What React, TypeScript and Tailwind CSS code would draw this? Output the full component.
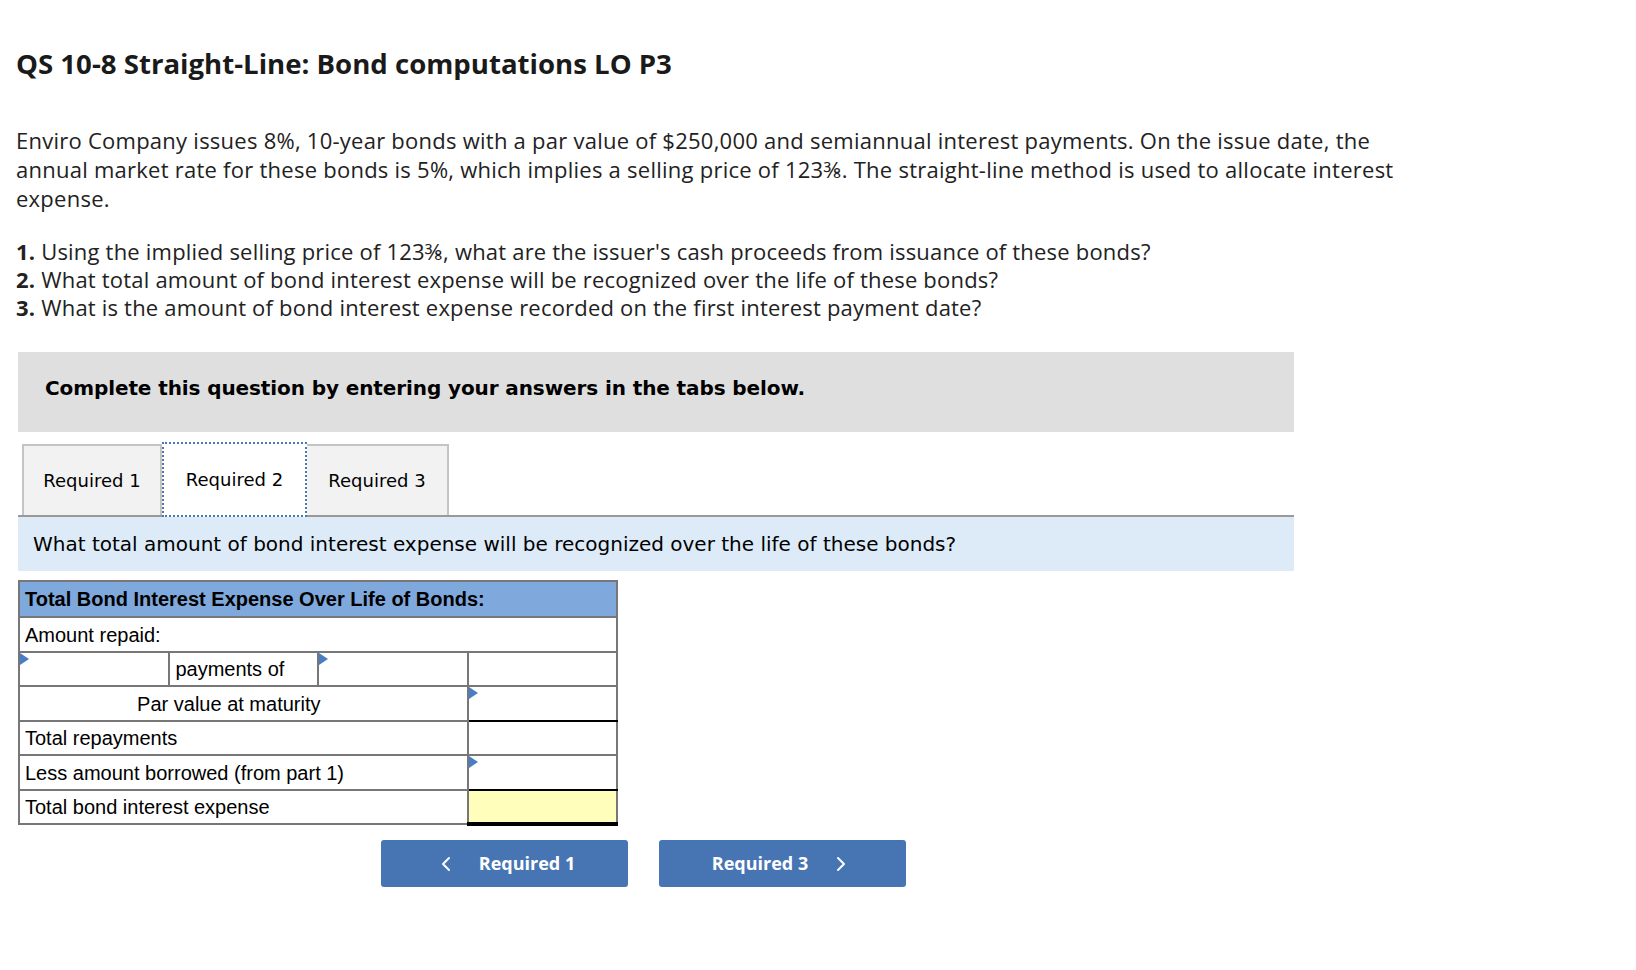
import React from 'react';
import { ChevronLeft, ChevronRight } from 'lucide-react';

const Marker = () => (
  <span className="absolute left-0 top-0 w-0 h-0 border-y-[6px] border-y-transparent border-l-[9px] border-l-[#4a7ec4]" />
);

const App = () => {
  const arial = { fontFamily: '"Liberation Sans", Arial, sans-serif' };
  const proxima = { fontFamily: '"Open Sans", Lato, sans-serif' };
  return (
    <div className="bg-white min-h-[970px] text-[#222]">
      <div className="pl-4 pt-[44px]" style={proxima}>
        <h1 className="text-[27.6px] font-bold leading-[38px] text-[#1a1a1a]">
          QS 10-8 Straight-Line: Bond computations LO P3
        </h1>
        <p className="mt-[44px] text-[22px] leading-[29px] tracking-[0.25px] text-[#222]">
          Enviro Company issues 8%, 10-year bonds with a par value of $250,000 and semiannual interest payments. On the issue date, the
          <br />
          annual market rate for these bonds is 5%, which implies a selling price of 123⅜. The straight-line method is used to allocate interest
          <br />
          expense.
        </p>
        <ol className="mt-[24px] text-[22px] leading-[28px] tracking-[0.2px]">
          <li><b>1.</b> Using the implied selling price of 123⅜, what are the issuer's cash proceeds from issuance of these bonds?</li>
          <li><b>2.</b> What total amount of bond interest expense will be recognized over the life of these bonds?</li>
          <li><b>3.</b> What is the amount of bond interest expense recorded on the first interest payment date?</li>
        </ol>
      </div>

      <div className="ml-[18px] w-[1276px] mt-[31px]" style={{ fontFamily: '"DejaVu Sans", Verdana, sans-serif' }}>
        <div className="bg-[#dfdfdf] h-[80px] pl-[27px] pt-[21px]">
          <p className="text-[20px] font-bold tracking-[-0.1px] text-black">Complete this question by entering your answers in the tabs below.</p>
        </div>

        <div className="mt-[10px] flex items-end pl-[4px] border-b-2 border-[#999]">
          <div className="w-[140px] h-[71px] flex items-center justify-center bg-[#f2f2f2] border-2 border-b-0 border-[#c4c4c4] text-[18px] text-black">
            Required 1
          </div>
          <div className="w-[145px] h-[75px] -mb-[2px] flex items-center justify-center bg-white border-2 border-dotted border-[#4a76b3] text-[18px] text-black">
            Required 2
          </div>
          <div className="w-[142px] h-[71px] flex items-center justify-center bg-[#f2f2f2] border-2 border-b-0 border-l-0 border-[#c4c4c4] text-[18px] text-black">
            Required 3
          </div>
        </div>

        <div className="bg-[#ddebf8] h-[54px] flex items-center pl-[15px] text-[20px] text-black">
          What total amount of bond interest expense will be recognized over the life of these bonds?
        </div>

        <table className="mt-[9px] w-[600px] border-collapse border-2 border-[#777] text-[20px] text-black" style={arial}>
          <colgroup>
            <col className="w-[151px]" />
            <col className="w-[149px]" />
            <col className="w-[150px]" />
            <col className="w-[150px]" />
          </colgroup>
          <tbody>
            <tr className="h-[36px] bg-[#7fa8dc]">
              <td colSpan={4} className="border-2 border-[#777] px-[5px] font-bold">Total Bond Interest Expense Over Life of Bonds:</td>
            </tr>
            <tr className="h-[35px]">
              <td colSpan={4} className="border-2 border-[#777] px-[5px]">Amount repaid:</td>
            </tr>
            <tr className="h-[34px]">
              <td className="relative border-2 border-[#777] p-0"><Marker /></td>
              <td className="border-2 border-[#777] px-[5px]">payments of</td>
              <td className="relative border-2 border-[#777] p-0"><Marker /></td>
              <td className="border-2 border-[#777]" />
            </tr>
            <tr className="h-[35px]">
              <td colSpan={3} className="border-2 border-[#777] text-center pr-[29px]">Par value at maturity</td>
              <td className="relative border-2 border-[#777] border-b-black p-0"><Marker /></td>
            </tr>
            <tr className="h-[34px]">
              <td colSpan={3} className="border-2 border-[#777] px-[5px]">Total repayments</td>
              <td className="border-2 border-[#777] border-t-black" />
            </tr>
            <tr className="h-[35px]">
              <td colSpan={3} className="border-2 border-[#777] px-[5px]">Less amount borrowed (from part 1)</td>
              <td className="relative border-2 border-[#777] border-b-black p-0"><Marker /></td>
            </tr>
            <tr className="h-[34px]">
              <td colSpan={3} className="border-2 border-[#777] px-[5px]">Total bond interest expense</td>
              <td className="border-2 border-[#777] border-t-black border-b-4 border-b-black bg-[#ffffbb]" />
            </tr>
          </tbody>
        </table>

        <div className="mt-[14px] flex gap-[31px] pl-[363px]" style={proxima}>
          <button className="w-[247px] h-[47px] rounded-[3px] bg-[#4775b3] text-white font-bold text-[18px] flex items-center justify-center gap-[21px]">
            <ChevronLeft size={24} strokeWidth={2} />
            <span>Required 1</span>
          </button>
          <button className="w-[247px] h-[47px] rounded-[3px] bg-[#4775b3] text-white font-bold text-[18px] flex items-center justify-center gap-[21px]">
            <span>Required 3</span>
            <ChevronRight size={24} strokeWidth={2} />
          </button>
        </div>
      </div>
    </div>
  );
};

export default App;
